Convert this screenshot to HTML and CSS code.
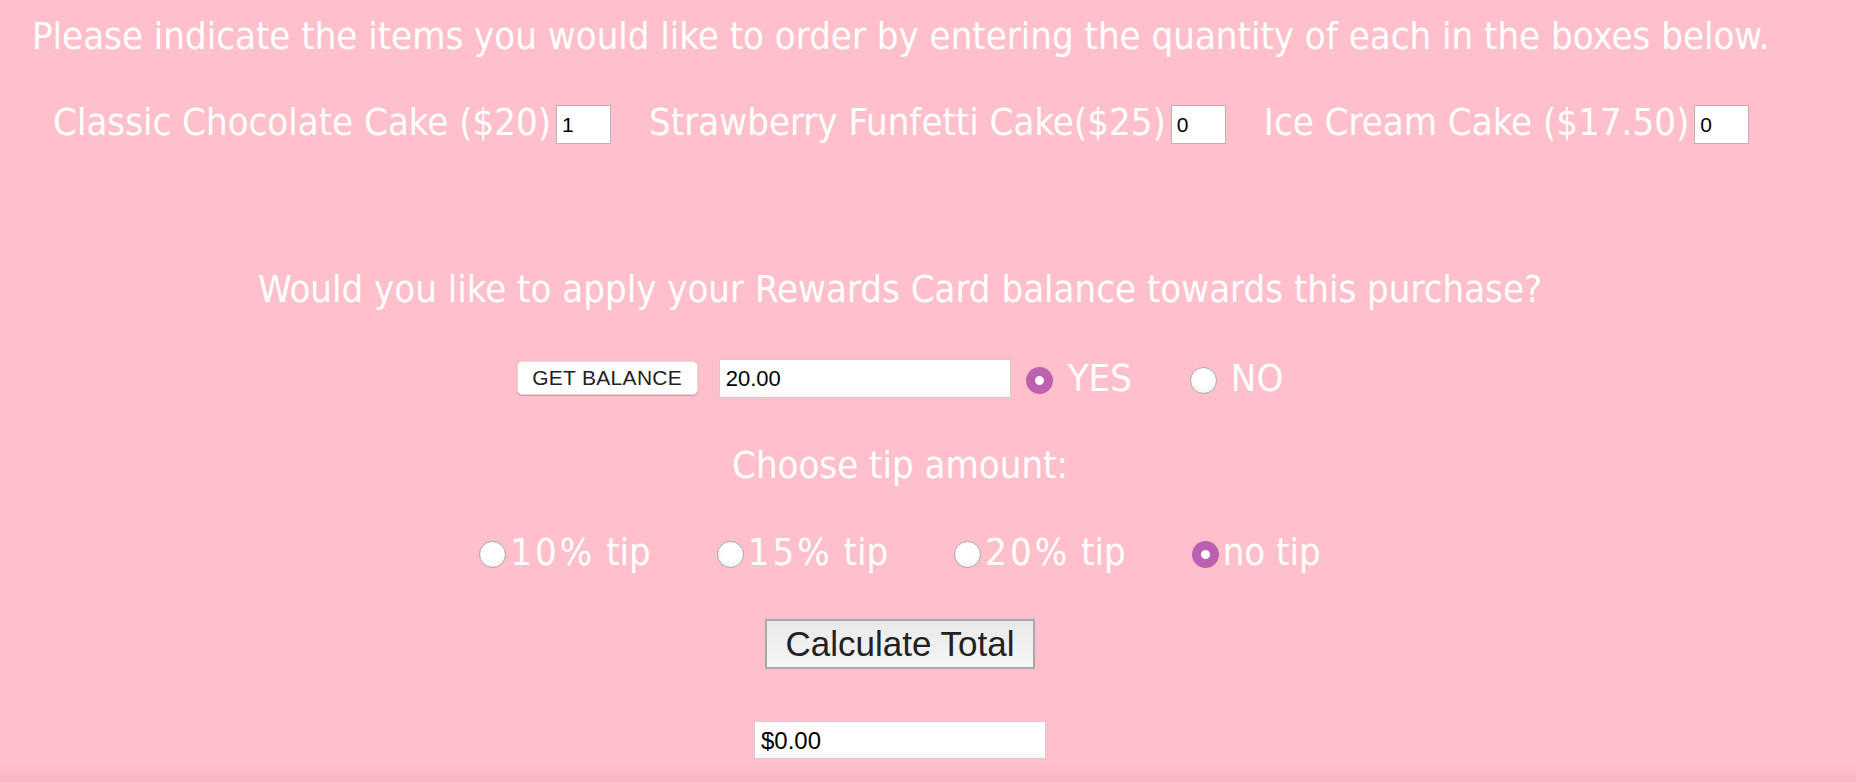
FILE: index.html
```html
<!DOCTYPE html>
<html>
  <head>
    <meta charset="utf-8" />
    <title>Cake Order</title>
    <link rel="stylesheet" href="styles.css">
  </head>
  <body>
    <main class="order">
      <p class="intro">Please indicate the items you would like to order by entering the quantity of each in the boxes below.</p>

      <div class="cakes">
        <label class="cake">Classic Chocolate Cake ($20)<input class="qty" type="text" value="1" /></label>
        <label class="cake">Strawberry Funfetti Cake($25)<input class="qty" type="text" value="0" /></label>
        <label class="cake">Ice Cream Cake ($17.50)<input class="qty" type="text" value="0" /></label>
      </div>

      <p class="question rewards">Would you like to apply your Rewards Card balance towards this purchase?</p>

      <div class="balance">
        <button class="btn-balance" type="button">GET BALANCE</button>
        <input class="field" type="text" value="20.00" />
        <label class="choice"><input class="radio" type="radio" name="reward" checked />YES</label>
        <label class="choice choice-no"><input class="radio" type="radio" name="reward" />NO</label>
      </div>

      <p class="question tip-title">Choose tip amount:</p>

      <div class="tips">
        <label class="choice"><input class="radio" type="radio" name="tip" /><span class="pct">10%</span>&nbsp;tip</label>
        <label class="choice"><input class="radio" type="radio" name="tip" /><span class="pct">15%</span>&nbsp;tip</label>
        <label class="choice"><input class="radio" type="radio" name="tip" /><span class="pct">20%</span>&nbsp;tip</label>
        <label class="choice"><input class="radio" type="radio" name="tip" checked />no tip</label>
      </div>

      <div class="calc-row">
        <button class="btn-calc" type="button">Calculate Total</button>
      </div>

      <div class="total-row">
        <input class="field total" type="text" value="$0.00" />
      </div>
    </main>
  </body>
</html>
```

FILE: styles.css
```css
html {
  height: 100%;
  background: linear-gradient(to bottom, #ffc0cb 0, #ffc0cb 762px, #f5b5c1 782px);
}

body {
  margin: 0;
  height: 782px;
  overflow: hidden;
  color: #ffffff;
  font-family: "Liberation Sans Narrow", "DejaVu Sans Condensed", "Liberation Sans", sans-serif;
  font-size: 38px;
  white-space: nowrap;
}

.order {
  width: 1800px;
  padding-top: 12px;
}

.intro {
  margin: 0;
  padding-left: 32px;
  line-height: 48px;
}

.cakes {
  display: flex;
  align-items: center;
  gap: 38px;
  height: 48px;
  margin-top: 38px;
  padding-left: 53px;
}

.cake {
  display: flex;
  align-items: center;
}

.qty {
  box-sizing: border-box;
  width: 55px;
  height: 39px;
  margin: 4px 0 0 5px;
  padding: 2px 5px 0;
  border: 1px solid #b9b1b3;
  border-top-color: #c9a5ad;
  background: #ffffff;
  color: #000000;
  font-family: "Liberation Sans", sans-serif;
  font-size: 21px;
}

.question {
  margin: 0;
  text-align: center;
  line-height: 48px;
}

.rewards {
  margin-top: 119px;
}

.tip-title {
  margin-top: 39px;
}

/* balance row */
.balance {
  display: flex;
  justify-content: center;
  align-items: center;
  height: 48px;
  margin-top: 41px;
}

.btn-balance {
  box-sizing: border-box;
  width: 181px;
  height: 34px;
  padding: 0;
  border: 1px solid #e2d6d8;
  border-radius: 5px;
  background: #ffffff;
  box-shadow: 0 1px 1px rgba(120, 80, 90, 0.35);
  color: #222222;
  font-family: "Liberation Sans", sans-serif;
  font-size: 21px;
  letter-spacing: 0.3px;
}

.field {
  box-sizing: border-box;
  width: 292px;
  height: 39px;
  padding: 2px 6px 0;
  border: 1px solid #d9c9cc;
  background: linear-gradient(#ffffff, #ffffff 80%, #f7f7f7);
  color: #000000;
  font-family: "Liberation Sans", sans-serif;
  font-size: 22px;
}

.balance .field {
  margin-left: 21px;
  margin-right: 15px;
}

.choice {
  display: flex;
  align-items: center;
}

.radio {
  appearance: none;
  -webkit-appearance: none;
  box-sizing: border-box;
  width: 27px;
  height: 27px;
  margin: 4px 15px 0 0;
  border: 1px solid #a9a9a9;
  border-radius: 50%;
  background: radial-gradient(circle at 50% 35%, #ffffff 45%, #ececec 100%);
}

.radio:checked {
  border: none;
  background: radial-gradient(circle, #ffffff 0, #ffffff 4px, #be60b2 5px);
}

.choice-no {
  margin-left: 58px;
}

.choice-no .radio {
  margin-right: 14px;
}

/* tips */
.tips {
  display: flex;
  justify-content: center;
  align-items: center;
  gap: 66px;
  height: 48px;
  margin-top: 39px;
}

.tips .radio {
  margin-right: 4px;
}

.pct {
  letter-spacing: 3px;
}

.calc-row,
.total-row {
  display: flex;
  justify-content: center;
}

.calc-row {
  margin-top: 43px;
}

.btn-calc {
  box-sizing: border-box;
  width: 270px;
  height: 50px;
  padding: 0;
  border: 2px solid #a9a9a9;
  border-radius: 0;
  background: linear-gradient(#e9e9e9, #f6f6f6);
  color: #222222;
  font-family: "Liberation Sans", sans-serif;
  font-size: 35px;
}

.total-row {
  margin-top: 52px;
}

.total {
  height: 38px;
  font-size: 24px;
}
```
